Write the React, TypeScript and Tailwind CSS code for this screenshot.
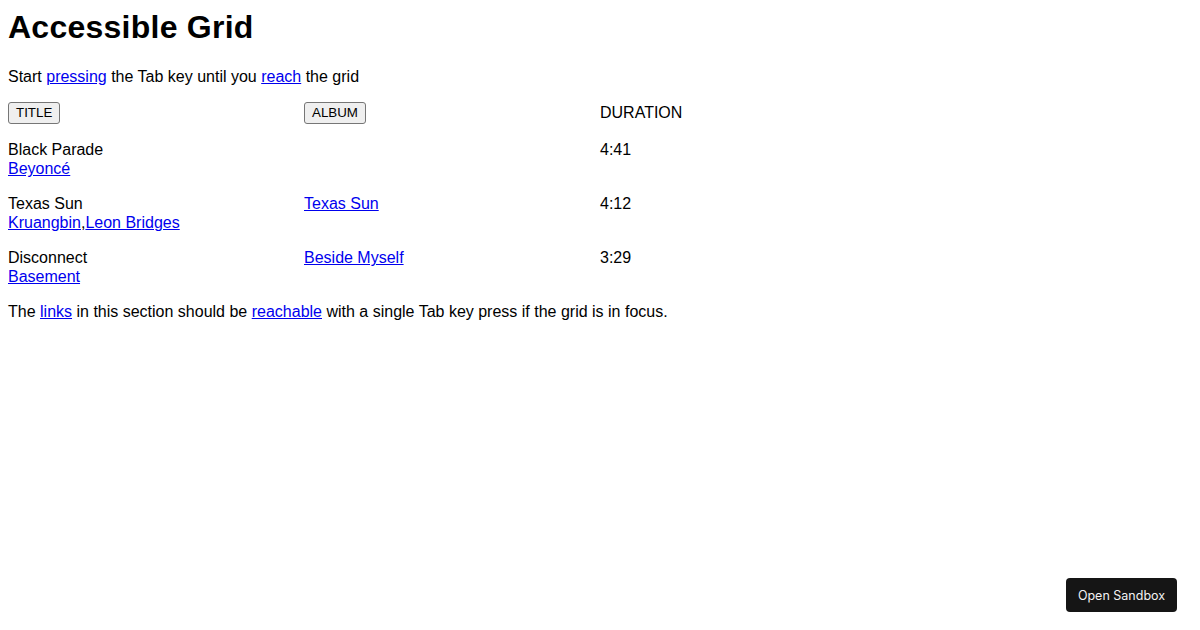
import React from "react";

const link = "text-[#0000ee] underline";

function Btn({ children }: { children: React.ReactNode }) {
  return (
    <button className="bg-[#efefef] border border-[#767676] rounded-[3px] px-[7px] py-[2px] text-[13.33px] leading-[16px] text-black self-start">
      {children}
    </button>
  );
}

export default function App() {
  const rows = [
    { title: "Black Parade", artists: ["Beyoncé"], album: null, dur: "4:41" },
    { title: "Texas Sun", artists: ["Kruangbin", "Leon Bridges"], album: "Texas Sun", dur: "4:12" },
    { title: "Disconnect", artists: ["Basement"], album: "Beside Myself", dur: "3:29" },
  ];
  return (
    <div className="min-h-[630px] bg-white p-2 text-black text-[16px] leading-[19px] relative" style={{ fontFamily: '"Liberation Sans", Arial, sans-serif' }}>
      <h1 className="text-[32px] leading-[38px] font-bold tracking-[0.25px] mb-[21.44px]">Accessible Grid</h1>
      <p className="mb-4">
        Start <a href="#" className={link}>pressing</a> the Tab key until you <a href="#" className={link}>reach</a> the grid
      </p>
      <div className="grid grid-cols-4 gap-y-4">
        <div className="flex"><Btn>TITLE</Btn></div>
        <div className="flex"><Btn>ALBUM</Btn></div>
        <div className="pt-[1px]">DURATION</div>
        <div />
        {rows.map((r) => (
          <React.Fragment key={r.title}>
            <div>
              <div>{r.title}</div>
              <div>
                {r.artists.map((a, i) => (
                  <React.Fragment key={a}>
                    {i > 0 && ","}
                    <a href="#" className={link}>{a}</a>
                  </React.Fragment>
                ))}
              </div>
            </div>
            <div>{r.album && <a href="#" className={link}>{r.album}</a>}</div>
            <div>{r.dur}</div>
            <div />
          </React.Fragment>
        ))}
      </div>
      <p className="mt-4">
        The <a href="#" className={link}>links</a> in this section should be <a href="#" className={link}>reachable</a> with a single Tab key press if the grid is in focus.
      </p>
      <button
        className="absolute right-[23px] bottom-[18px] h-[34px] w-[111px] rounded-[4px] bg-[#151515] text-[12.5px] text-[#f2f2f2]"
        style={{ fontFamily: 'Inter, "Liberation Sans", sans-serif' }}
      >
        Open Sandbox
      </button>
    </div>
  );
}
